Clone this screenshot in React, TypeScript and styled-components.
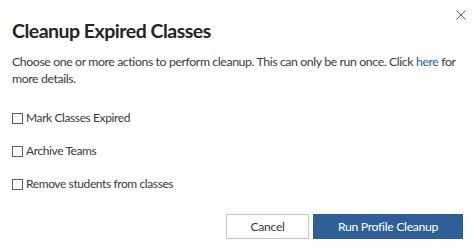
import React from "react";
import styled, { createGlobalStyle } from "styled-components";

const Global = createGlobalStyle`
  html, body { margin: 0; padding: 0; background: #fff; }
  body { font-family: Lato, "Open Sans", Arial, sans-serif; color: #323130; }
  * { box-sizing: border-box; }
`;

const Dialog = styled.div`
  position: relative;
  width: 474px;
  height: 252px;
  padding: 17px 11px 0 12px;
  display: flex;
  flex-direction: column;
`;

const Close = styled.button`
  position: absolute;
  top: 8px;
  right: 6px;
  width: 14px;
  height: 14px;
  padding: 0;
  border: none;
  background: transparent;
  display: flex;
  align-items: center;
  justify-content: center;
`;

const Title = styled.h1`
  margin: 0;
  font-size: 19.5px;
  font-weight: 700;
  line-height: 28px;
  color: #252423;
  letter-spacing: -0.5px;
`;

const Text = styled.p`
  margin: 8px 0 0 0;
  font-size: 12.3px;
  line-height: 17px;
  color: #3b3a39;
  letter-spacing: -0.4px;
  width: 448px;
`;

const Link = styled.a`
  color: #1a5fa8;
  text-decoration: none;
`;

const Options = styled.div`
  display: flex;
  flex-direction: column;
  gap: 15px;
  margin-top: 22px;
`;

const Option = styled.label`
  display: flex;
  align-items: center;
  gap: 3px;
  font-size: 12px;
  line-height: 18px;
  letter-spacing: -0.4px;
  color: #3b3a39;
`;

const Box = styled.span`
  width: 11px;
  height: 11px;
  border: 1px solid #605e5c;
  background: #fff;
  display: inline-block;
`;

const Footer = styled.div`
  display: flex;
  justify-content: flex-end;
  gap: 4px;
  margin-top: 21px;
`;

const Button = styled.button<{ $primary?: boolean }>`
  height: 25px;
  width: ${(p) => (p.$primary ? "150px" : "83px")};
  font-family: Lato, "Open Sans", Arial, sans-serif;
  font-size: 12.2px;
  letter-spacing: -0.3px;
  border: 1px solid ${(p) => (p.$primary ? "#2b5b8f" : "#c8c6c4")};
  background: ${(p) => (p.$primary ? "#2e6097" : "#fff")};
  color: ${(p) => (p.$primary ? "#fff" : "#3b3a39")};
  padding: 0;
`;

export default function App() {
  return (
    <>
      <Global />
      <Dialog>
        <Close aria-label="Close">
          <svg width="10" height="10" viewBox="0 0 10 10">
            <path d="M0.5 0.5 L9.5 9.5 M9.5 0.5 L0.5 9.5" stroke="#605e5c" strokeWidth="1" />
          </svg>
        </Close>
        <Title>Cleanup Expired Classes</Title>
        <Text>
          Choose one or more actions to perform cleanup. This can only be run once. Click{" "}
          <Link href="#">here</Link> for more details.
        </Text>
        <Options>
          <Option><Box />Mark Classes Expired</Option>
          <Option><Box />Archive Teams</Option>
          <Option><Box />Remove students from classes</Option>
        </Options>
        <Footer>
          <Button>Cancel</Button>
          <Button $primary>Run Profile Cleanup</Button>
        </Footer>
      </Dialog>
    </>
  );
}
